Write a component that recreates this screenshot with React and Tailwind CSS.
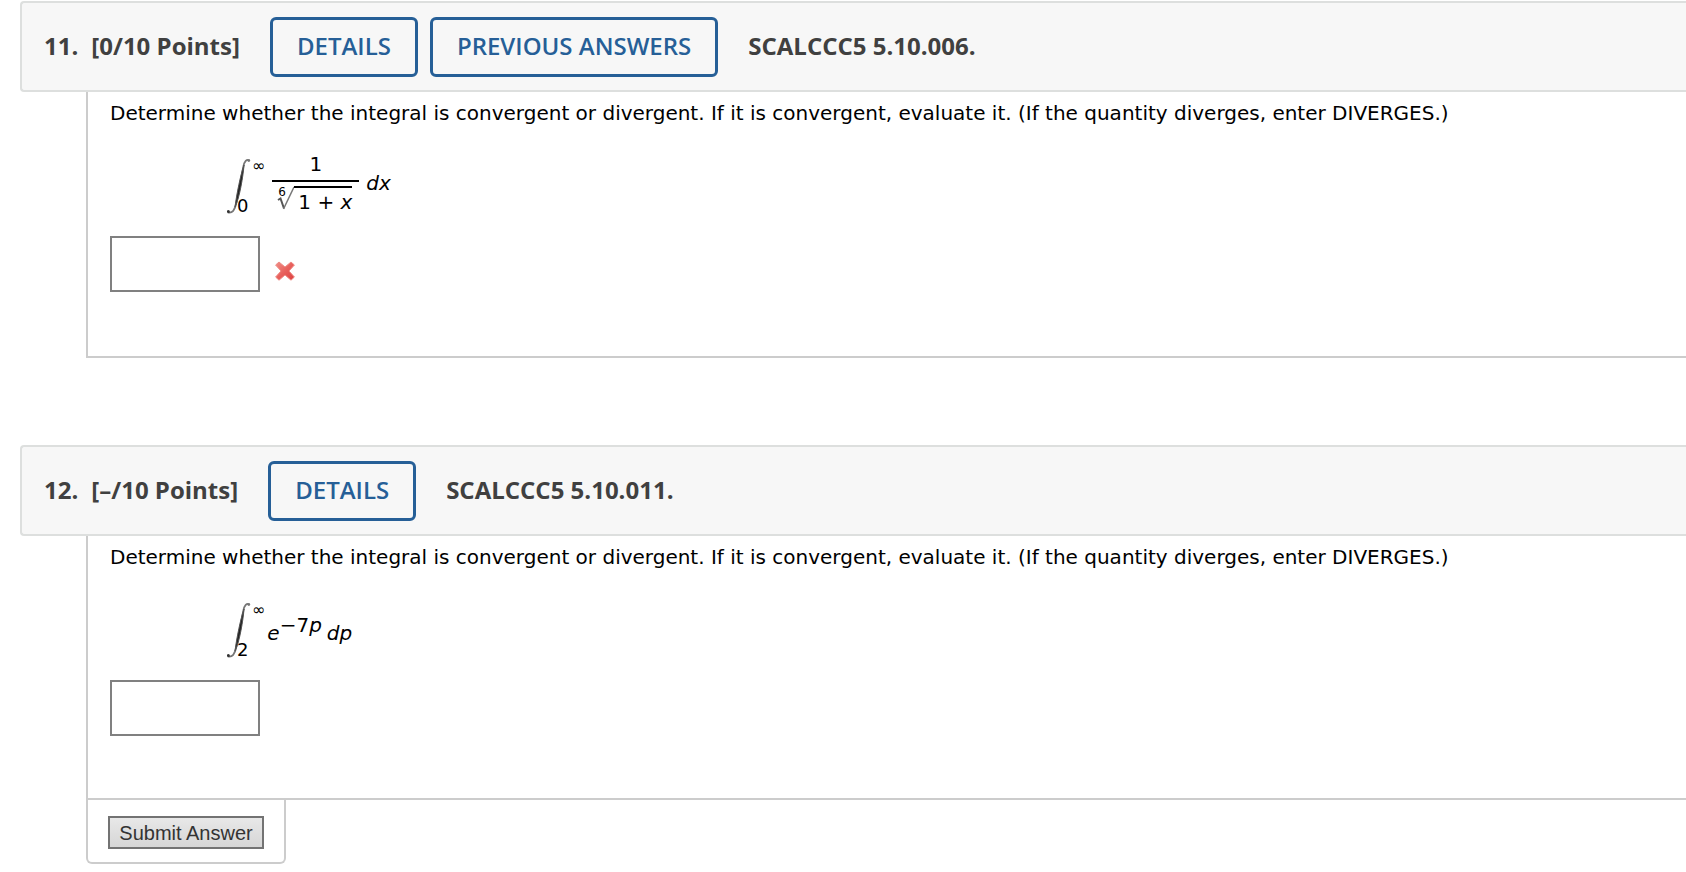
import React, { useState } from "react";

const IntegralSign = () => (
  <svg viewBox="0 0 24 56" className="w-6 h-14 shrink-0" aria-hidden="true">
    <path
      d="M22.5 2.2C19.5 0.8 17.4 3.4 16.4 8.5C14.2 19 12 34 9.2 45.5C7.8 52 5.4 55.6 0.8 54.4"
      fill="none"
      stroke="#777"
      strokeWidth="1.8"
    />
    <path
      d="M17 7C14 15 9.6 36 8 49C12.6 40 16.2 18 17 7Z"
      fill="#222"
      stroke="#555"
      strokeWidth="1"
    />
    <circle cx="21.8" cy="2.6" r="1.4" fill="#777" />
    <circle cx="1.4" cy="53.6" r="1.5" fill="#333" />
  </svg>
);

const Integral = ({ lower, upper }) => (
  <div className="flex">
    <IntegralSign />
    <div className="flex flex-col justify-between h-14 -ml-4 text-base leading-4">
      <span className="pl-[17px]">{upper}</span>
      <span className="pl-[2px] text-lg leading-4">{lower}</span>
    </div>
  </div>
);

const RootFraction = () => (
  <div className="flex flex-col items-center">
    <span className="-mt-1 h-[26px] leading-5">1</span>
    <div className="flex w-[87px] pl-1 pt-1 border-t-2 border-black">
      <span className="w-2 text-xs leading-3 pl-[2px]">6</span>
      <svg viewBox="0 0 18 24" className="w-[18px] h-6 -ml-2 shrink-0" aria-hidden="true">
        <path d="M2 14L4.5 12.5L8 22.5" fill="none" stroke="#555" strokeWidth="2" />
        <path d="M7.5 23L18 1" fill="none" stroke="#777" strokeWidth="1.5" />
      </svg>
      <span className="border-t-2 border-black pl-1 h-6 leading-7 whitespace-nowrap">
        1 + <i>x</i>
      </span>
    </div>
  </div>
);

const WrongMark = () => (
  <svg viewBox="0 0 20 20" className="w-5 h-5" role="img" aria-label="Incorrect">
    <defs>
      <linearGradient id="wrong" x1="0" y1="0" x2="1" y2="1">
        <stop offset="0" stopColor="#f09088" />
        <stop offset="0.5" stopColor="#e8605c" />
        <stop offset="1" stopColor="#dc4040" />
      </linearGradient>
    </defs>
    <path
      d="M4 1L10 6L16 1L19.4 4L14 10L19.4 16L16 19.2L10 14L4 19.2L0.6 16L6 10L0.6 4Z"
      fill="url(#wrong)"
      stroke="#ee8a84"
      strokeWidth="1"
      strokeLinejoin="round"
    />
  </svg>
);

const HeaderButton = ({ children }) => (
  <button
    type="button"
    className="h-[60px] px-6 pb-[2px] border-3 border-[#265f97] rounded-md font-semibold text-[#265f97]"
  >
    {children}
  </button>
);

const Question = ({ number, points, actions, code, wrong, children, footer }) => {
  const [answer, setAnswer] = useState("");

  return (
    <section>
      <header className="flex items-center h-[91px] pl-[22px] bg-[#f7f7f7] border-2 border-r-0 border-[#dddfde] rounded-l font-['Open_Sans',sans-serif] text-2xl font-bold text-[#404040] whitespace-nowrap">
        <h2 className="flex gap-[13px] pb-[2px]">
          <span>{number}.</span>
          <span>{points}</span>
        </h2>
        <div className="flex gap-3 mx-[30px]">
          {actions.map((action) => (
            <HeaderButton key={action}>{action}</HeaderButton>
          ))}
        </div>
        <span className="pb-[2px]">{code}</span>
      </header>

      <div
        className={
          "ml-[66px] pl-[22px] pt-[7px] border-l-2 border-b-2 border-[#ccc] " +
          (footer ? "pb-[62px]" : "pb-16")
        }
      >
        <p className="leading-7">
          Determine whether the integral is convergent or divergent. If it is convergent, evaluate
          it. (If the quantity diverges, enter DIVERGES.)
        </p>
        <div className="flex h-[109px] pt-[31px] pl-[117px]">{children}</div>
        <div className="flex items-center gap-[15px]">
          <input
            type="text"
            aria-label={"Answer to question " + number}
            value={answer}
            onChange={(e) => setAnswer(e.target.value)}
            className="w-[150px] h-14 px-2 border-2 border-[#808080] bg-white"
          />
          {wrong && (
            <div className="pt-[14px]">
              <WrongMark />
            </div>
          )}
        </div>
      </div>
      {footer}
    </section>
  );
};

const SubmitBar = () => (
  <div className="flex ml-[66px]">
    <div className="px-5 pt-4 pb-[13px] border-2 border-t-0 border-[#ccc] rounded-b-md">
      <button
        type="submit"
        className="block h-[33px] w-[156px] border-2 border-[#737373] bg-linear-to-b from-[#e8e8e8] to-[#d6d6d6] font-['Liberation_Sans',sans-serif] text-xl leading-7 text-[#333] whitespace-nowrap"
      >
        Submit Answer
      </button>
    </div>
  </div>
);

const App = () => {
  return (
    <form
      onSubmit={(e) => e.preventDefault()}
      className="flex flex-col gap-[87px] pl-5 pt-px bg-white text-black text-xl font-['DejaVu_Sans',sans-serif] overflow-hidden"
    >
      <Question
        number={11}
        points="[0/10 Points]"
        actions={["DETAILS", "PREVIOUS ANSWERS"]}
        code="SCALCCC5 5.10.006."
        wrong
      >
        <Integral lower="0" upper="∞" />
        <div className="flex items-start pl-[7px]">
          <RootFraction />
          <i className="pl-[7px] pt-[11px] leading-7">dx</i>
        </div>
      </Question>

      <Question
        number={12}
        points="[–/10 Points]"
        actions={["DETAILS"]}
        code="SCALCCC5 5.10.011."
        footer={<SubmitBar />}
      >
        <Integral lower="2" upper="∞" />
        <div className="flex pt-[17px] pl-[2px] leading-7">
          <i>e</i>
          <span className="-mt-2">
            −7<i>p</i>
          </span>
          <i className="pl-[5px]">dp</i>
        </div>
      </Question>
    </form>
  );
};

export default App;
